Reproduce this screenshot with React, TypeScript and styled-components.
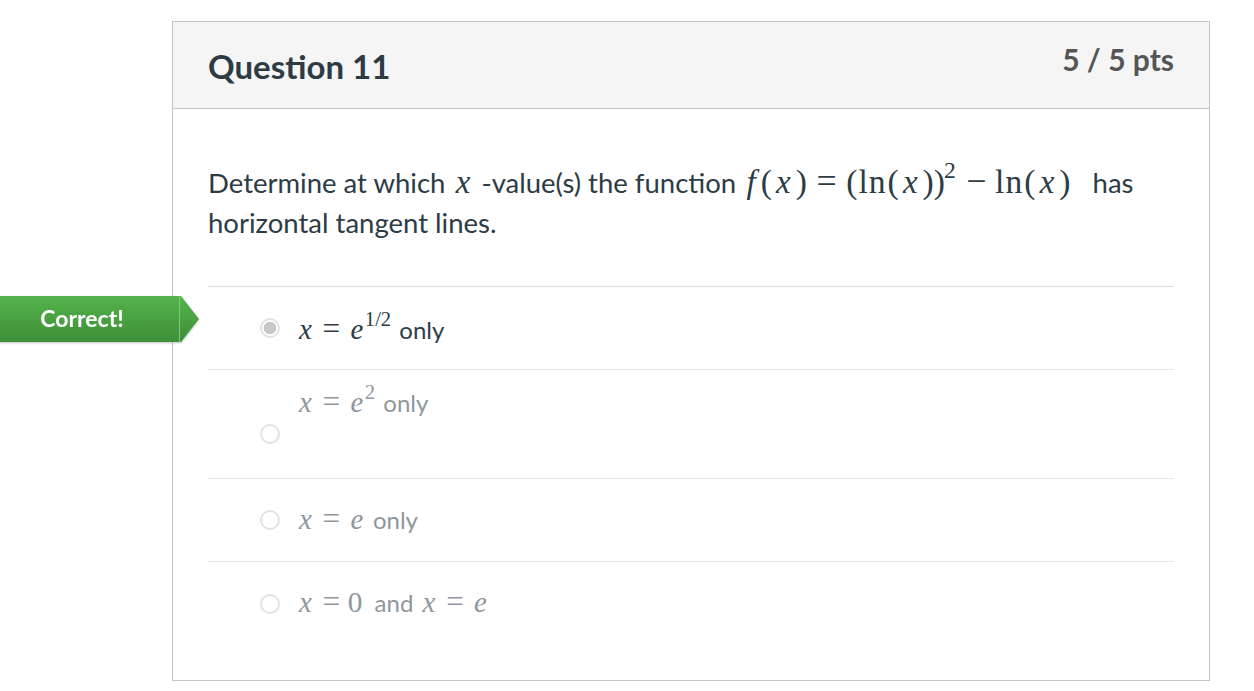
import React from "react";
import styled, { createGlobalStyle } from "styled-components";

const GlobalStyle = createGlobalStyle`
  html, body {
    margin: 0;
    padding: 0;
    background: #ffffff;
    font-family: Lato, "Open Sans", sans-serif;
  }
`;

const mathFont = `"Liberation Serif", "DejaVu Serif", serif`;

const MathVar = styled.span`
  font-family: ${mathFont};
  font-style: italic;
  font-size: 1.2em;
  padding: 0 0.12em 0 0.1em;
`;

const MathFn = styled.span`
  font-family: ${mathFont};
  font-size: 1.22em;
  letter-spacing: 0.03em;
`;

const MathNum = styled.span`
  font-family: ${mathFont};
  font-size: 1.22em;
`;

const MathParen = styled.span`
  font-family: ${mathFont};
  font-size: 1.22em;
  padding: 0 0.03em;
`;

const MathOp = styled.span`
  font-family: ${mathFont};
  font-size: 1.3em;
  padding: 0 0.24em;
`;

const Sup = styled.sup`
  font-family: ${mathFont};
  font-size: 0.86em;
  line-height: 0;
  vertical-align: 0.62em;
  margin: 0 2px 0 -2px;
`;

interface Answer {
  id: number;
  content: React.ReactNode;
  selected?: boolean;
  stacked?: boolean;
}

const answers: Answer[] = [
  {
    id: 1,
    selected: true,
    content: (
      <>
        <MathVar>x</MathVar>
        <MathOp>=</MathOp>
        <MathVar>e</MathVar>
        <Sup>1/2</Sup> only
      </>
    ),
  },
  {
    id: 2,
    stacked: true,
    content: (
      <>
        <MathVar>x</MathVar>
        <MathOp>=</MathOp>
        <MathVar>e</MathVar>
        <Sup>2</Sup> only
      </>
    ),
  },
  {
    id: 3,
    content: (
      <>
        <MathVar>x</MathVar>
        <MathOp>=</MathOp>
        <MathVar>e</MathVar> only
      </>
    ),
  },
  {
    id: 4,
    content: (
      <>
        <MathVar>x</MathVar>
        <MathOp>=</MathOp>
        <MathNum>0</MathNum>
        &nbsp; and <MathVar>x</MathVar>
        <MathOp>=</MathOp>
        <MathVar>e</MathVar>
      </>
    ),
  },
];

const Page = styled.div`
  padding: 21px 44px 10px 172px;
`;

const Card = styled.div`
  width: 1036px;
  border: 1px solid #c4c4c4;
  background: #fff;
`;

const Header = styled.div`
  display: flex;
  justify-content: space-between;
  align-items: flex-start;
  height: 86px;
  padding: 0 35px;
  background: #f5f5f5;
  border-bottom: 1px solid #c4c4c4;
`;

const Title = styled.h2`
  margin: 24px 0 0;
  font-family: Lato, sans-serif;
  font-weight: 700;
  font-size: 33px;
  line-height: 40px;
  color: #2d3b45;
`;

const Points = styled.div`
  margin-top: 20px;
  font-family: Lato, sans-serif;
  font-weight: 700;
  font-size: 30px;
  line-height: 34px;
  color: #555555;
`;

const Body = styled.div`
  padding: 52px 35px 35px 35px;
`;

const QuestionText = styled.div`
  font-family: Lato, sans-serif;
  font-size: 27.5px;
  line-height: 40px;
  color: #2d3b45;
  padding-right: 20px;
  margin-bottom: 43px;
`;

const AnswerList = styled.div`
  border-top: 1px solid #dcdcdc;
`;

const AnswerRow = styled.div<{ $stacked?: boolean }>`
  position: relative;
  display: flex;
  flex-direction: ${(p) => (p.$stacked ? "column-reverse" : "row")};
  align-items: ${(p) => (p.$stacked ? "flex-start" : "center")};
  justify-content: ${(p) => (p.$stacked ? "flex-end" : "flex-start")};
  gap: ${(p) => (p.$stacked ? "4px" : "16px")};
  height: ${(p) => (p.$stacked ? "109px" : "83px")};
  padding: ${(p) => (p.$stacked ? "17px 0 32px 52px" : "0 0 0 52px")};
  border-bottom: 1px solid #e8e8e8;
  box-sizing: border-box;

  &:last-child {
    border-bottom: none;
  }
`;

const Radio = styled.span<{ $selected?: boolean }>`
  display: inline-block;
  flex: none;
  width: 20px;
  height: 20px;
  border-radius: 50%;
  box-sizing: border-box;
  border: 2px solid #e2e2e2;
  background: ${(p) =>
    p.$selected ? "radial-gradient(circle, #c8c8c8 0 6px, #fff 6.5px)" : "#fff"};
`;

const AnswerText = styled.span<{ $selected?: boolean; $indent?: boolean }>`
  font-family: Lato, sans-serif;
  font-size: 24px;
  line-height: 34px;
  white-space: nowrap;
  color: ${(p) => (p.$selected ? "#2d3b45" : "#8f969c")};
  margin-top: ${(p) => (p.$selected ? "2px" : "-2px")};
  margin-left: ${(p) => (p.$indent ? "36px" : "0")};
`;

const CorrectFlag = styled.div`
  position: absolute;
  top: 9px;
  right: calc(100% + 9px);
  display: flex;
  filter: drop-shadow(0 1px 1px rgba(0, 0, 0, 0.25));
`;

const FlagLabel = styled.div`
  width: 180px;
  height: 46px;
  box-sizing: border-box;
  padding: 0 14px 3px 0;
  display: flex;
  align-items: center;
  justify-content: center;
  background: linear-gradient(#55b34b, #3e8f38);
  color: #fff;
  font-family: Lato, sans-serif;
  font-weight: 700;
  font-size: 23px;
`;

const FlagArrow = styled.svg`
  display: block;
`;

function App() {
  return (
    <Page>
      <GlobalStyle />
      <Card>
        <Header>
          <Title>Question 11</Title>
          <Points>5 / 5 pts</Points>
        </Header>
        <Body>
          <QuestionText>
            Determine at which <MathVar>x</MathVar> -value(s) the function{" "}
            <MathVar>f</MathVar>
            <MathParen>(</MathParen>
            <MathVar>x</MathVar>
            <MathParen>)</MathParen>
            <MathOp>=</MathOp>
            <MathParen>(</MathParen>
            <MathFn>ln</MathFn>
            <MathParen>(</MathParen>
            <MathVar>x</MathVar>
            <MathParen>))</MathParen>
            <Sup>2</Sup>
            <MathOp>−</MathOp>
            <MathFn>ln</MathFn>
            <MathParen>(</MathParen>
            <MathVar>x</MathVar>
            <MathParen>)</MathParen>
            &nbsp;&nbsp; has horizontal tangent lines.
          </QuestionText>
          <AnswerList>
            {answers.map((a) => (
              <AnswerRow key={a.id} $stacked={a.stacked}>
                {a.selected && (
                  <CorrectFlag>
                    <FlagLabel>Correct!</FlagLabel>
                    <FlagArrow viewBox="0 0 20 46" width="20" height="46">
                      <defs>
                        <linearGradient id="flagGrad" x1="0" y1="0" x2="0" y2="1">
                          <stop offset="0" stopColor="#55b34b" />
                          <stop offset="1" stopColor="#3e8f38" />
                        </linearGradient>
                      </defs>
                      <path d="M0 0 L2 0 L20 23 L2 46 L0 46 Z" fill="url(#flagGrad)" />
                      <line x1="0.5" y1="0" x2="0.5" y2="46" stroke="#7cc873" strokeWidth="1" />
                    </FlagArrow>
                  </CorrectFlag>
                )}
                <Radio $selected={a.selected} />
                <AnswerText $selected={a.selected} $indent={a.stacked}>
                  {a.content}
                </AnswerText>
              </AnswerRow>
            ))}
          </AnswerList>
        </Body>
      </Card>
    </Page>
  );
}

export default App;
